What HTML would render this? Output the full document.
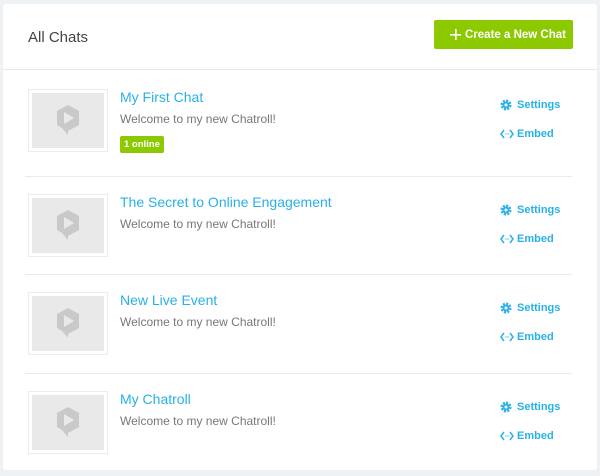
<!DOCTYPE html>
<html><head><style>
*{margin:0;padding:0;box-sizing:border-box}
body{width:600px;height:476px;background:#eef2f4;font-family:"Liberation Sans",sans-serif;position:relative;overflow:hidden}
.card{position:absolute;left:3px;top:4px;width:594px;height:466px;background:#fff;border-radius:3px}
.hdr{position:absolute;left:0;top:0;width:594px;height:66px;border-bottom:1px solid #e5e9ec}
.hdr h1{position:absolute;left:25px;top:25px;font-size:15px;font-weight:normal;color:#444}
.btn{position:absolute;left:431px;top:16px;width:139px;height:29px;background:#8cc900;border-radius:2px;color:#fff;font-size:11.5px;font-weight:bold;line-height:30px;padding-left:31px;white-space:nowrap}
.btn:before{content:"";position:absolute;left:16px;top:9px;width:11px;height:11px;background:linear-gradient(#fff,#fff) center/11px 1.6px no-repeat,linear-gradient(#fff,#fff) center/1.6px 11px no-repeat}
.row{position:absolute;left:25px;width:547px;border-bottom:1px solid #e8ebee}
.th{position:absolute;left:3px;top:0;width:80px;height:63px;border:1px solid #ececec;padding:3px}
.th div{width:100%;height:100%;background:#e9e9e9;position:relative}
.th svg{position:absolute;left:23px;top:11px}
.t{position:absolute;left:95px;top:0;font-size:14px;color:#28b1e8}
.d{position:absolute;left:95px;top:23px;font-size:12px;color:#777}
.b{position:absolute;left:95px;top:47px;background:#8cc900;color:#fff;font-size:9.5px;font-weight:bold;padding:3px 4px;border-radius:2px}
.s,.e{position:absolute;left:475px;font-size:11px;font-weight:bold;color:#28b1e8}
.s{top:10px}.e{top:39px}
.s svg,.e svg{position:absolute;left:0;top:0}
.s span,.e span{margin-left:17px}
</style></head><body>
<div class="card">
<div class="hdr"><h1>All Chats</h1><div class="btn">Create a New Chat</div></div>
</div>
<div class="row" style="top:89px;height:88px"><div class="th"><div><svg width="26" height="32" viewBox="0 0 26 32"><path d="M13 1L24 7V21L13 27V31L7 24L2 21V7Z" fill="#c9c9c9"/><path d="M9 8L19 14L9 20Z" fill="#e9e9e9"/></svg></div></div>
<div class="t" style="top:0px">My First Chat</div><div class="d">Welcome to my new Chatroll!</div><div class="b">1 online</div>
<div class="s"><svg width="12" height="12" viewBox="0 0 12 12"><circle cx="6" cy="6" r="4.2" fill="none" stroke="#28b1e8" stroke-width="2.6" stroke-dasharray="2 1.3"/><circle cx="6" cy="6" r="3.5" fill="#28b1e8"/><circle cx="6" cy="6" r="1.5" fill="#fff"/></svg><span>Settings</span></div>
<div class="e"><svg width="14" height="12" viewBox="0 0 14 12"><path d="M4 2L1 6L4 10M10 2L13 6L10 10" fill="none" stroke="#28b1e8" stroke-width="1.5"/><path d="M5.5 6H8.5" stroke="#28b1e8" stroke-width="1.2" stroke-dasharray="1 1"/></svg><span>Embed</span></div></div>

<div class="row" style="top:194px;height:81px"><div class="th"><div><svg width="26" height="32" viewBox="0 0 26 32"><path d="M13 1L24 7V21L13 27V31L7 24L2 21V7Z" fill="#c9c9c9"/><path d="M9 8L19 14L9 20Z" fill="#e9e9e9"/></svg></div></div>
<div class="t" style="top:0px">The Secret to Online Engagement</div><div class="d">Welcome to my new Chatroll!</div>
<div class="s" style="top:10px"><svg width="12" height="12" viewBox="0 0 12 12"><circle cx="6" cy="6" r="4.2" fill="none" stroke="#28b1e8" stroke-width="2.6" stroke-dasharray="2 1.3"/><circle cx="6" cy="6" r="3.5" fill="#28b1e8"/><circle cx="6" cy="6" r="1.5" fill="#fff"/></svg><span>Settings</span></div>
<div class="e" style="top:39px"><svg width="14" height="12" viewBox="0 0 14 12"><path d="M4 2L1 6L4 10M10 2L13 6L10 10" fill="none" stroke="#28b1e8" stroke-width="1.5"/><path d="M5.5 6H8.5" stroke="#28b1e8" stroke-width="1.2" stroke-dasharray="1 1"/></svg><span>Embed</span></div></div>

<div class="row" style="top:292px;height:82px"><div class="th"><div><svg width="26" height="32" viewBox="0 0 26 32"><path d="M13 1L24 7V21L13 27V31L7 24L2 21V7Z" fill="#c9c9c9"/><path d="M9 8L19 14L9 20Z" fill="#e9e9e9"/></svg></div></div>
<div class="t" style="top:0px">New Live Event</div><div class="d">Welcome to my new Chatroll!</div>
<div class="s" style="top:10px"><svg width="12" height="12" viewBox="0 0 12 12"><circle cx="6" cy="6" r="4.2" fill="none" stroke="#28b1e8" stroke-width="2.6" stroke-dasharray="2 1.3"/><circle cx="6" cy="6" r="3.5" fill="#28b1e8"/><circle cx="6" cy="6" r="1.5" fill="#fff"/></svg><span>Settings</span></div>
<div class="e" style="top:39px"><svg width="14" height="12" viewBox="0 0 14 12"><path d="M4 2L1 6L4 10M10 2L13 6L10 10" fill="none" stroke="#28b1e8" stroke-width="1.5"/><path d="M5.5 6H8.5" stroke="#28b1e8" stroke-width="1.2" stroke-dasharray="1 1"/></svg><span>Embed</span></div></div>

<div class="row" style="top:391px;height:75px;border:none"><div class="th"><div><svg width="26" height="32" viewBox="0 0 26 32"><path d="M13 1L24 7V21L13 27V31L7 24L2 21V7Z" fill="#c9c9c9"/><path d="M9 8L19 14L9 20Z" fill="#e9e9e9"/></svg></div></div>
<div class="t" style="top:0px">My Chatroll</div><div class="d">Welcome to my new Chatroll!</div>
<div class="s" style="top:10px"><svg width="12" height="12" viewBox="0 0 12 12"><circle cx="6" cy="6" r="4.2" fill="none" stroke="#28b1e8" stroke-width="2.6" stroke-dasharray="2 1.3"/><circle cx="6" cy="6" r="3.5" fill="#28b1e8"/><circle cx="6" cy="6" r="1.5" fill="#fff"/></svg><span>Settings</span></div>
<div class="e" style="top:39px"><svg width="14" height="12" viewBox="0 0 14 12"><path d="M4 2L1 6L4 10M10 2L13 6L10 10" fill="none" stroke="#28b1e8" stroke-width="1.5"/><path d="M5.5 6H8.5" stroke="#28b1e8" stroke-width="1.2" stroke-dasharray="1 1"/></svg><span>Embed</span></div></div>
</body></html>
